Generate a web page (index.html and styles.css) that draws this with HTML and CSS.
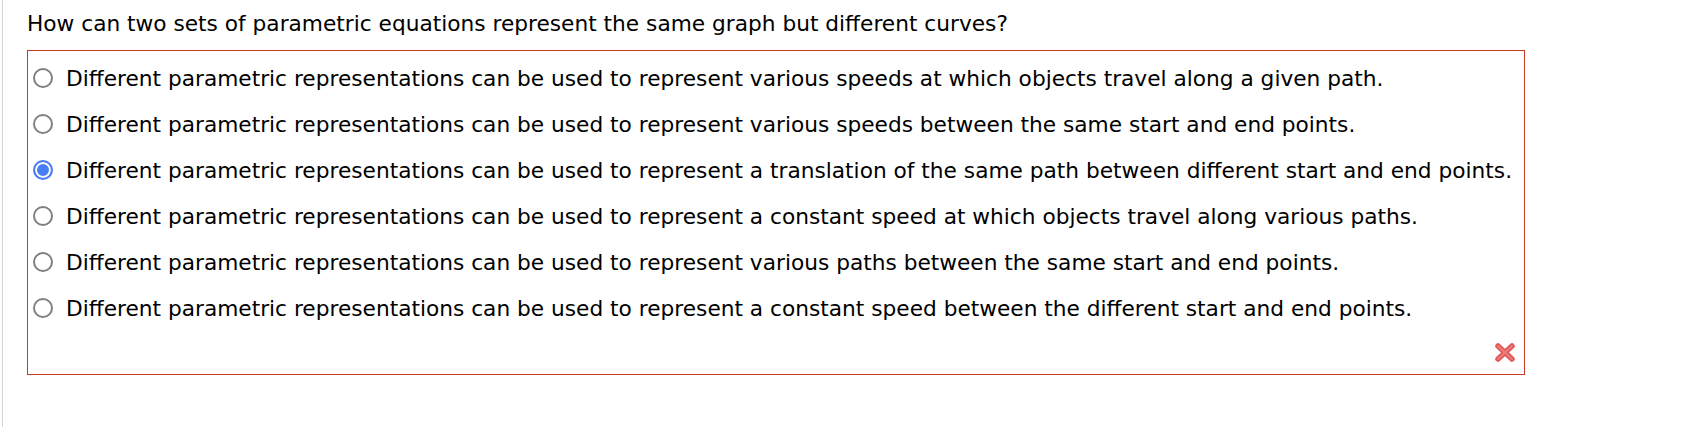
FILE: index.html
```html
<!DOCTYPE html>
<html>
<head>
  <meta charset="UTF-8">
  <title>Parametric Equations Question</title>
  <link rel="stylesheet" href="styles.css">
</head>
<body>
  <div class="page">
    <p class="question">How can two sets of parametric equations represent the same graph but different curves?</p>

    <div class="answer-box incorrect">
      <label class="choice">
        <input type="radio" name="q1">
        <span>Different parametric representations can be used to represent various speeds at which objects travel along a given path.</span>
      </label>
      <label class="choice">
        <input type="radio" name="q1">
        <span>Different parametric representations can be used to represent various speeds between the same start and end points.</span>
      </label>
      <label class="choice">
        <input type="radio" name="q1" checked>
        <span>Different parametric representations can be used to represent a translation of the same path between different start and end points.</span>
      </label>
      <label class="choice">
        <input type="radio" name="q1">
        <span>Different parametric representations can be used to represent a constant speed at which objects travel along various paths.</span>
      </label>
      <label class="choice">
        <input type="radio" name="q1">
        <span>Different parametric representations can be used to represent various paths between the same start and end points.</span>
      </label>
      <label class="choice">
        <input type="radio" name="q1">
        <span>Different parametric representations can be used to represent a constant speed between the different start and end points.</span>
      </label>

      <div class="status">
        <svg class="wrong-icon" width="22" height="21" viewBox="0 0 22 21">
          <path d="M4 4 L18 17 M18 4 L4 17" stroke="#e05a5a" stroke-width="5.5" stroke-linecap="round"/>
          <path d="M4 4 L18 17 M18 4 L4 17" stroke="#ea7c7a" stroke-width="2" stroke-linecap="round"/>
        </svg>
      </div>
    </div>
  </div>
</body>
</html>
```

FILE: styles.css
```css
body {
  margin: 0;
  background-color: #fff;
  color: #000;
  font-family: "DejaVu Sans", Verdana, sans-serif;
  font-size: 21.7px;
}

.page {
  margin-left: 2px;
  border-left: 1px solid #d4d4d4;
  min-height: 100vh;
  padding: 11px 0 0 24px;
  box-sizing: border-box;
}

.question {
  margin: 0 0 13px 0;
  line-height: 26px;
}

.answer-box {
  width: 1498px;
  box-sizing: border-box;
  border: 1px solid #c8d0d8;
  padding: 4px 0 0 5px;
}

.answer-box.incorrect {
  border-color: #c83a26;
}

.choice {
  display: flex;
  align-items: center;
  gap: 13px;
  height: 46px;
  white-space: nowrap;
}

.choice input {
  appearance: none;
  margin: 0;
  width: 20px;
  height: 20px;
  flex: none;
  border: 2px solid #808080;
  border-radius: 50%;
  background-color: #fff;
}

.choice input:checked {
  border-color: #4a7cf4;
  background-color: #4a7cf4;
  box-shadow: inset 0 0 0 2px #fff;
}

.status {
  display: flex;
  justify-content: flex-end;
  padding: 11px 8px 11px 0;
}

.wrong-icon {
  display: block;
}
```
